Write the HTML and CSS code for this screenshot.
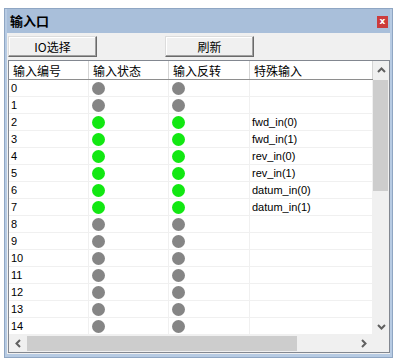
FILE: index.html
```html
<!DOCTYPE html>
<html>
<head>
<meta charset="utf-8">
<link rel="stylesheet" href="styles.css">
</head>
<body>
<div class="window">
  <div class="titlebar">
    <span class="title">输入口</span>
    <span class="close">x</span>
  </div>
  <div class="content">
    <div class="toolbar">
      <button class="btn">IO选择</button>
      <button class="btn">刷新</button>
    </div>
    <div class="list">
      <div class="table">
        <div class="row head">
          <div class="cell">输入编号</div>
          <div class="cell">输入状态</div>
          <div class="cell">输入反转</div>
          <div class="cell">特殊输入</div>
        </div>
        <div class="row"><div class="cell num">0</div><div class="cell"><i class="dot off"></i></div><div class="cell"><i class="dot off"></i></div><div class="cell"></div></div>
        <div class="row"><div class="cell num">1</div><div class="cell"><i class="dot off"></i></div><div class="cell"><i class="dot off"></i></div><div class="cell"></div></div>
        <div class="row"><div class="cell num">2</div><div class="cell"><i class="dot on"></i></div><div class="cell"><i class="dot on"></i></div><div class="cell txt">fwd_in(0)</div></div>
        <div class="row"><div class="cell num">3</div><div class="cell"><i class="dot on"></i></div><div class="cell"><i class="dot on"></i></div><div class="cell txt">fwd_in(1)</div></div>
        <div class="row"><div class="cell num">4</div><div class="cell"><i class="dot on"></i></div><div class="cell"><i class="dot on"></i></div><div class="cell txt">rev_in(0)</div></div>
        <div class="row"><div class="cell num">5</div><div class="cell"><i class="dot on"></i></div><div class="cell"><i class="dot on"></i></div><div class="cell txt">rev_in(1)</div></div>
        <div class="row"><div class="cell num">6</div><div class="cell"><i class="dot on"></i></div><div class="cell"><i class="dot on"></i></div><div class="cell txt">datum_in(0)</div></div>
        <div class="row"><div class="cell num">7</div><div class="cell"><i class="dot on"></i></div><div class="cell"><i class="dot on"></i></div><div class="cell txt">datum_in(1)</div></div>
        <div class="row"><div class="cell num">8</div><div class="cell"><i class="dot off"></i></div><div class="cell"><i class="dot off"></i></div><div class="cell"></div></div>
        <div class="row"><div class="cell num">9</div><div class="cell"><i class="dot off"></i></div><div class="cell"><i class="dot off"></i></div><div class="cell"></div></div>
        <div class="row"><div class="cell num">10</div><div class="cell"><i class="dot off"></i></div><div class="cell"><i class="dot off"></i></div><div class="cell"></div></div>
        <div class="row"><div class="cell num">11</div><div class="cell"><i class="dot off"></i></div><div class="cell"><i class="dot off"></i></div><div class="cell"></div></div>
        <div class="row"><div class="cell num">12</div><div class="cell"><i class="dot off"></i></div><div class="cell"><i class="dot off"></i></div><div class="cell"></div></div>
        <div class="row"><div class="cell num">13</div><div class="cell"><i class="dot off"></i></div><div class="cell"><i class="dot off"></i></div><div class="cell"></div></div>
        <div class="row"><div class="cell num">14</div><div class="cell"><i class="dot off"></i></div><div class="cell"><i class="dot off"></i></div><div class="cell"></div></div>
      </div>
      <div class="vscroll">
        <div class="arrow"><svg width="9" height="6" viewBox="0 0 9 6"><polyline points="1,5 4.5,1.5 8,5" fill="none" stroke="#606060" stroke-width="2"/></svg></div>
        <div class="vtrack"><div class="vthumb"></div></div>
        <div class="arrow"><svg width="9" height="6" viewBox="0 0 9 6"><polyline points="1,1 4.5,4.5 8,1" fill="none" stroke="#606060" stroke-width="2"/></svg></div>
      </div>
      <div class="hscroll">
        <div class="harrow"><svg width="6" height="9" viewBox="0 0 6 9"><polyline points="5,1 1.5,4.5 5,8" fill="none" stroke="#606060" stroke-width="2"/></svg></div>
        <div class="htrack"><div class="hthumb"></div></div>
        <div class="harrow"><svg width="6" height="9" viewBox="0 0 6 9"><polyline points="1,1 4.5,4.5 1,8" fill="none" stroke="#606060" stroke-width="2"/></svg></div>
      </div>
      <div class="corner"></div>
    </div>
  </div>
</div>
</body>
</html>
```

FILE: styles.css
```css
* { box-sizing: border-box; }
html, body { margin: 0; padding: 0; background: #ffffff; }
body {
  font-family: "Liberation Sans", "Noto Sans CJK SC", sans-serif;
  font-size: 11px;
  color: #000;
}
.window {
  margin: 8px 0 0 4px;
  width: 389px;
  height: 350px;
  border: 1px solid #8fa6c3;
  background: #b7cbe3;
  padding: 0 2px 3px 2px;
  display: flex;
  flex-direction: column;
}
.titlebar {
  height: 24px;
  display: flex;
  align-items: center;
  justify-content: space-between;
  padding: 0 2px 0 3px;
  background: #a9bfda;
}
.title {
  font-family: "Noto Sans CJK SC", sans-serif;
  font-weight: bold;
  font-size: 13px;
  line-height: 14px;
  color: #000;
}
.close {
  width: 11px;
  height: 12px;
  background: #cc3b3b;
  color: #fff;
  font-family: "DejaVu Sans", sans-serif;
  font-weight: bold;
  font-size: 9px;
  line-height: 11px;
  text-align: center;
  margin-top: 2px;
}
.content {
  flex: 1;
  background: #f0f0f0;
  padding: 3px 0 1px 1px;
  display: flex;
  flex-direction: column;
}
.toolbar {
  display: flex;
  gap: 68px;
  height: 21px;
}
.btn {
  width: 89px;
  height: 21px;
  margin: 0;
  padding: 0;
  background: #f0f0f0;
  border: 1px solid;
  border-color: #dcdcdc #6a6a6a #6a6a6a #dcdcdc;
  box-shadow: inset -1px -1px 0 #a0a0a0, inset 1px 1px 0 #ffffff;
  font-family: "Noto Sans CJK SC", sans-serif;
  font-size: 12px;
  line-height: 18px;
  color: #000;
}
.list {
  margin-top: 3px;
  width: 382px;
  height: 293px;
  border: 1px solid #828790;
  background: #fff;
  display: grid;
  grid-template-columns: 364px 16px;
  grid-template-rows: 274px 17px;
}
.table { overflow: hidden; }
.row {
  display: grid;
  grid-template-columns: 80px 80px 81px 123px;
  height: 17px;
  border-bottom: 1px solid #f0f0f0;
}
.row .cell {
  border-right: 1px solid #f0f0f0;
  display: flex;
  align-items: center;
  padding-left: 3px;
  white-space: nowrap;
  overflow: hidden;
}
.row .cell.num { padding-left: 2px; }
.row .cell.txt { padding-left: 2px; }
.row.head {
  height: 19px;
  border-bottom: 1px solid #8e8e8e;
}
.row.head .cell {
  border-right: 1px solid #d5d5d5;
  font-family: "Noto Sans CJK SC", sans-serif;
  font-size: 12px;
  padding-left: 4px;
}
.dot {
  display: block;
  width: 13px;
  height: 13px;
  border-radius: 50%;
}
.dot.off { background: #858585; }
.dot.on { background: #12e812; }
.vscroll {
  background: #f0f0f0;
  display: flex;
  flex-direction: column;
}
.arrow {
  height: 17px;
  display: flex;
  align-items: center;
  justify-content: center;
}
.vtrack { flex: 1; padding-right: 1px; }
.vthumb { height: 111px; background: #cdcdcd; margin-top: 2px; }
.hscroll {
  background: #f0f0f0;
  display: flex;
  align-items: stretch;
}
.harrow {
  width: 18px;
  display: flex;
  align-items: center;
  justify-content: center;
}
.htrack { flex: 1; padding: 1px 0; }
.hthumb { width: 270px; height: 100%; background: #cdcdcd; }
.corner { background: #f0f0f0; }
```
